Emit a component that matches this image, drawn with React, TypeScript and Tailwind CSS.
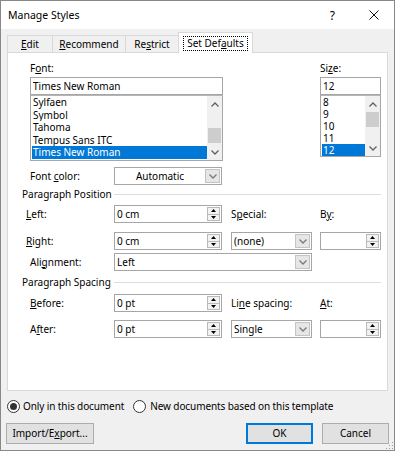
import React from "react";

const U = ({ children }: { children: React.ReactNode }) => (
  <span className="underline underline-offset-[1px] decoration-[1px]">{children}</span>
);

function Up() {
  return (
    <svg width="5" height="3" viewBox="0 0 5 3">
      <path d="M0 3 L2.5 0 L5 3Z" fill="#000" />
    </svg>
  );
}
function Down() {
  return (
    <svg width="5" height="3" viewBox="0 0 5 3">
      <path d="M0 0 L2.5 3 L5 0Z" fill="#000" />
    </svg>
  );
}

function Chevron({ dir, color = "#606060" }: { dir: "up" | "down"; color?: string }) {
  return (
    <svg width="8" height="5" viewBox="0 0 8 5">
      {dir === "up" ? (
        <polyline points="0.5,4.5 4,1 7.5,4.5" fill="none" stroke={color} strokeWidth="1.3" />
      ) : (
        <polyline points="0.5,0.5 4,4 7.5,0.5" fill="none" stroke={color} strokeWidth="1.3" />
      )}
    </svg>
  );
}

function SpinBox({ value, w }: { value: string; w: string }) {
  return (
    <div className={`${w} h-[18px] border border-[#a6a6a6] bg-white flex items-stretch`}>
      <span className="flex-1 pl-[2px] leading-[16px]">{value}</span>
      <div className="flex flex-col w-[14px] py-px pr-px">
        <div className="flex-1 border border-[#b9b9b9] bg-[#f2f2f2] flex items-center justify-center">
          <Up />
        </div>
        <div className="flex-1 border border-t-0 border-[#b9b9b9] bg-[#f2f2f2] flex items-center justify-center">
          <Down />
        </div>
      </div>
    </div>
  );
}

function DropDown({ value, w, center }: { value: string; w: string; center?: boolean }) {
  return (
    <div className={`${w} h-[18px] border border-[#a6a6a6] bg-white flex items-stretch`}>
      <span className={`flex-1 leading-[16px] ${center ? "text-center" : "pl-[2px]"}`}>{value}</span>
      <div className="w-[15px] my-px mr-px border border-[#c4c4c4] bg-[#e6e6e6] flex items-center justify-center">
        <Chevron dir="down" color="#7a7a7a" />
      </div>
    </div>
  );
}

function ScrollBar({ thumbTop, thumbH }: { thumbTop: string; thumbH: string }) {
  return (
    <div className="w-[15px] bg-[#f0f0f0] flex flex-col items-stretch">
      <div className="h-[16px] flex items-center justify-center">
        <Chevron dir="up" />
      </div>
      <div className="flex-1 flex flex-col">
        <div className={`${thumbTop}`} />
        <div className={`${thumbH} bg-[#cdcdcd] mx-px`} />
      </div>
      <div className="h-[16px] flex items-center justify-center">
        <Chevron dir="down" />
      </div>
    </div>
  );
}

function Radio({ checked }: { checked?: boolean }) {
  return (
    <div className="w-[13px] h-[13px] rounded-full border border-[#333] bg-white flex items-center justify-center">
      {checked && <div className="w-[7px] h-[7px] rounded-full bg-[#333]" />}
    </div>
  );
}

export default function App() {
  const fonts = ["Sylfaen", "Symbol", "Tahoma", "Tempus Sans ITC", "Times New Roman"];
  const sizes = ["8", "9", "10", "11", "12"];
  return (
    <div className="relative w-[395px] h-[451px] border border-[#888888] bg-[#f0f0f0] flex flex-col text-[10px] text-black font-['Noto_Sans',sans-serif] overflow-hidden">
      {/* Title bar */}
      <div className="h-[28px] bg-white flex items-center pl-[7px] shrink-0">
        <span className="text-[10.5px] pt-px">Manage Styles</span>
        <span className="ml-auto mr-[34px] text-[12px] pt-px">?</span>
        <svg width="10" height="10" viewBox="0 0 10 10" className="mr-[15px]">
          <path d="M0.5 0.5 L9.5 9.5 M9.5 0.5 L0.5 9.5" stroke="#111" strokeWidth="1" />
        </svg>
      </div>

      {/* Tabs */}
      <div className="h-[23px] flex items-end px-[6px] shrink-0">
        <div className="w-[45px] h-[17px] border-t border-l border-[#d9d9d9] flex items-center justify-center">
          <span>
            <U>E</U>dit
          </span>
        </div>
        <div className="w-[73px] h-[17px] border-t border-l border-[#d9d9d9] flex items-center justify-center">
          <span>
            <U>R</U>ecommend
          </span>
        </div>
        <div className="w-[53px] h-[17px] border-t border-l border-[#d9d9d9] flex items-center justify-center">
          <span>
            Re<U>s</U>trict
          </span>
        </div>
        <div className="relative z-10 -mb-px w-[75px] h-[21px] border border-b-0 border-[#d9d9d9] bg-white flex items-center justify-center">
          <span className="border border-dotted border-black px-[3px] leading-[13px]">
            Set Def<U>a</U>ults
          </span>
        </div>
      </div>

      {/* Panel */}
      <div className="mx-[6px] h-[339px] border border-[#d9d9d9] bg-white flex flex-col shrink-0">
        {/* Font / Size */}
        <div className="flex pt-[8px]">
          <div className="ml-[22px] w-[193px] flex flex-col">
            <div className="h-[14px] leading-[14px]">
              F<U>o</U>nt:
            </div>
            <div className="mt-[2px] h-[18px] border border-[#a6a6a6] pl-[2px] leading-[16px]">Times New Roman</div>
            <div className="h-[66px] border border-[#a6a6a6] border-t-[#b5b5b5] flex">
              <div className="flex-1 flex flex-col pl-px">
                {fonts.map((f, i) => (
                  <div
                    key={f}
                    className={`h-[12.5px] leading-[12.5px] pl-px overflow-hidden ${i === 4 ? "bg-[#0078d7] text-white" : ""}`}
                  >
                    {f}
                  </div>
                ))}
              </div>
              <ScrollBar thumbTop="h-[16px]" thumbH="h-[15px]" />
            </div>
          </div>
          <div className="ml-[97px] w-[61px] flex flex-col">
            <div className="h-[14px] leading-[14px]">
              Si<U>z</U>e:
            </div>
            <div className="mt-[2px] h-[18px] border border-[#a6a6a6] pl-[2px] leading-[16px]">12</div>
            <div className="h-[62px] border border-[#a6a6a6] border-t-[#b5b5b5] flex">
              <div className="flex-1 flex flex-col pl-px">
                {sizes.map((s, i) => (
                  <div
                    key={s}
                    className={`h-[12px] leading-[12px] pl-px overflow-hidden ${i === 4 ? "bg-[#0078d7] text-white" : ""}`}
                  >
                    {s}
                  </div>
                ))}
              </div>
              <ScrollBar thumbTop="h-0" thumbH="h-[15px]" />
            </div>
          </div>
        </div>

        {/* Font color */}
        <div className="mt-[6px] h-[18px] flex items-center pl-[22px]">
          <div className="w-[84px]">
            Font <U>c</U>olor:
          </div>
          <DropDown value="Automatic" w="w-[108px]" center />
        </div>

        {/* Paragraph Position */}
        <div className="mt-[2px] h-[14px] flex items-center pl-[14px]">
          <div className="w-[92px] leading-[14px]">Paragraph Position</div>
          <div className="flex-1 h-px bg-[#dcdcdc] mr-[6px]" />
        </div>

        <div className="mt-[4px] h-[18px] flex items-center pl-[18px]">
          <div className="w-[88px]">
            <U>L</U>eft:
          </div>
          <SpinBox value="0 cm" w="w-[108px]" />
          <div className="ml-[9px] w-[81px]">
            S<U>p</U>ecial:
          </div>
          <div className="ml-[8px]">
            B<U>y</U>:
          </div>
        </div>

        <div className="mt-[9px] h-[18px] flex items-center pl-[18px]">
          <div className="w-[88px]">
            <U>R</U>ight:
          </div>
          <SpinBox value="0 cm" w="w-[108px]" />
          <div className="ml-[9px]">
            <DropDown value="(none)" w="w-[81px]" />
          </div>
          <div className="ml-[8px]">
            <SpinBox value="" w="w-[61px]" />
          </div>
        </div>

        <div className="mt-[3px] h-[18px] flex items-center pl-[22px]">
          <div className="w-[84px]">
            Ali<U>g</U>nment:
          </div>
          <DropDown value="Left" w="w-[198px]" />
        </div>

        {/* Paragraph Spacing */}
        <div className="mt-[4px] h-[14px] flex items-center pl-[14px]">
          <div className="w-[92px] leading-[14px]">Paragraph Spacing</div>
          <div className="flex-1 h-px bg-[#dcdcdc] mr-[6px]" />
        </div>

        <div className="mt-[5px] h-[18px] flex items-center pl-[22px]">
          <div className="w-[84px]">
            <U>B</U>efore:
          </div>
          <SpinBox value="0 pt" w="w-[108px]" />
          <div className="ml-[9px] w-[81px]">
            Li<U>n</U>e spacing:
          </div>
          <div className="ml-[8px]">
            <U>A</U>t:
          </div>
        </div>

        <div className="mt-[8px] h-[18px] flex items-center pl-[22px]">
          <div className="w-[84px]">
            A<U>f</U>ter:
          </div>
          <SpinBox value="0 pt" w="w-[108px]" />
          <div className="ml-[9px]">
            <DropDown value="Single" w="w-[81px]" />
          </div>
          <div className="ml-[8px]">
            <SpinBox value="" w="w-[61px]" />
          </div>
        </div>
      </div>

      {/* Radios */}
      <div className="h-[30px] flex items-center pl-[6px] shrink-0 tracking-[-0.1px]">
        <Radio checked />
        <span className="ml-[3px]">Only in this document</span>
        <div className="ml-[9px]">
          <Radio />
        </div>
        <span className="ml-[4px]">New documents based on this template</span>
      </div>

      {/* Buttons */}
      <div className="mt-[2px] h-[21px] flex items-stretch shrink-0">
        <div className="ml-[5px] w-[88px] border border-[#adadad] bg-[#e1e1e1] flex items-center justify-center">
          <span>
            Import/E<U>x</U>port...
          </span>
        </div>
        <div className="ml-auto w-[67px] border-2 border-[#0078d7] bg-[#e1e1e1] flex items-center justify-center">
          OK
        </div>
        <div className="ml-[9px] mr-[5px] w-[67px] border border-[#adadad] bg-[#e1e1e1] flex items-center justify-center">
          Cancel
        </div>
      </div>

      {/* Resize grip */}
      <svg width="8" height="8" viewBox="0 0 8 8" className="absolute right-0 bottom-0">
        <rect x="6" y="0" width="1" height="1" fill="#a0a0a0" />
        <rect x="3" y="3" width="1" height="1" fill="#a0a0a0" />
        <rect x="6" y="3" width="1" height="1" fill="#a0a0a0" />
        <rect x="0" y="6" width="1" height="1" fill="#a0a0a0" />
        <rect x="3" y="6" width="1" height="1" fill="#a0a0a0" />
        <rect x="6" y="6" width="1" height="1" fill="#a0a0a0" />
      </svg>
    </div>
  );
}
